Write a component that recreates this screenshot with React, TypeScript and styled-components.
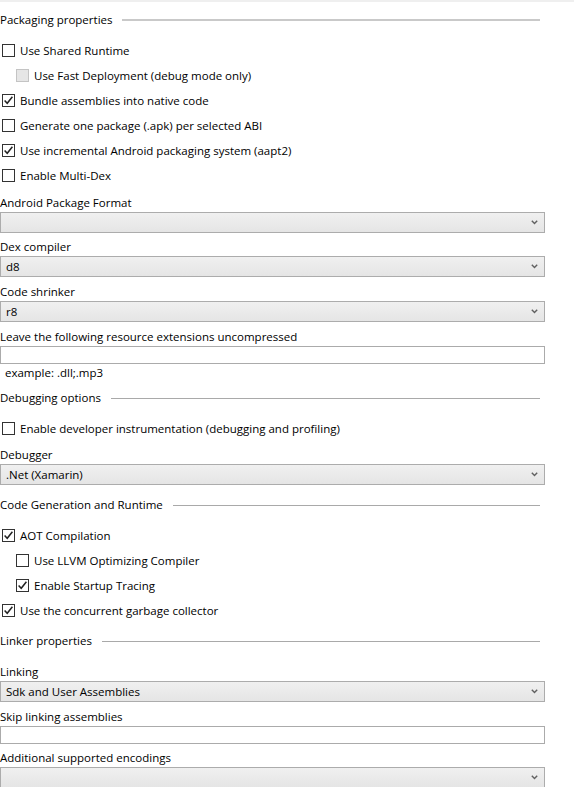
import React from "react";
import styled, { createGlobalStyle } from "styled-components";

const Global = createGlobalStyle`
  html, body { margin: 0; padding: 0; background: #ffffff; }
  body { font-family: "Segoe UI", "Open Sans", "Noto Sans", sans-serif; font-size: 11.5px; color: #000000; }
`;

const Page = styled.div`
  width: 574px;
  height: 787px;
  overflow: hidden;
  display: flex;
  flex-direction: column;
`;

const TopStrip = styled.div`
  height: 2px;
  background: #efefef;
  flex: none;
`;

const Content = styled.div`
  width: 545px;
  display: flex;
  flex-direction: column;
`;

const SectionHeader = styled.div<{ $top: number; $thick?: boolean }>`
  margin-top: ${(p) => p.$top}px;
  height: 20px;
  display: flex;
  align-items: center;
  gap: 10px;
  padding-right: 5px;
  line-height: 20px;
  white-space: nowrap;
  &::after {
    content: "";
    flex: 1;
    height: ${(p) => (p.$thick ? 2 : 1)}px;
    background: ${(p) => (p.$thick ? "#c9c9c9" : "#a9a9a9")};
  }
`;

const CheckList = styled.div<{ $top: number }>`
  margin-top: ${(p) => p.$top}px;
  display: flex;
  flex-direction: column;
`;

const CheckRow = styled.label<{ $indent?: boolean }>`
  height: 25px;
  display: flex;
  align-items: center;
  gap: 5px;
  padding-left: ${(p) => (p.$indent ? 16 : 2)}px;
  white-space: nowrap;
`;

const Box = styled.span<{ $disabled?: boolean }>`
  width: 13px;
  height: 13px;
  box-sizing: border-box;
  flex: none;
  border: 1px solid ${(p) => (p.$disabled ? "#c4c4c4" : "#333333")};
  background: ${(p) => (p.$disabled ? "#e6e6e6" : "#ffffff")};
  display: flex;
  align-items: center;
  justify-content: center;
`;

const Field = styled.div<{ $top: number }>`
  margin-top: ${(p) => p.$top}px;
  display: flex;
  flex-direction: column;
`;

const Label = styled.div`
  height: 18px;
  line-height: 18px;
  white-space: nowrap;
`;

const Select = styled.div`
  height: 21px;
  box-sizing: border-box;
  border: 1px solid #acacac;
  background: linear-gradient(#f0f0f0, #e5e5e5);
  display: flex;
  align-items: center;
  justify-content: space-between;
  padding: 0 6px 0 5px;
`;

const TextInput = styled.div`
  height: 18px;
  box-sizing: border-box;
  border: 1px solid #ababab;
  background: #ffffff;
`;

const Hint = styled.div`
  height: 18px;
  line-height: 18px;
  padding-left: 5px;
`;

const Check = ({ checked }: { checked: boolean }) =>
  checked ? (
    <svg width="11" height="11" viewBox="0 0 11 11">
      <path d="M1.6 5.6 L4.2 8.3 L9.4 1.8" fill="none" stroke="#222" strokeWidth="1.5" />
    </svg>
  ) : null;

const Chevron = () => (
  <svg width="7" height="5" viewBox="0 0 7 5">
    <path d="M0.8 0.8 L3.5 3.6 L6.2 0.8" fill="none" stroke="#606060" strokeWidth="1.4" />
  </svg>
);

type CB = { text: string; checked?: boolean; indent?: boolean; disabled?: boolean };

const CheckItem = ({ text, checked = false, indent, disabled }: CB) => (
  <CheckRow $indent={indent}>
    <Box $disabled={disabled}>
      <Check checked={checked} />
    </Box>
    <span>{text}</span>
  </CheckRow>
);

const SelectField = ({ label, value, top }: { label: string; value?: string; top: number }) => (
  <Field $top={top}>
    <Label>{label}</Label>
    <Select>
      <span>{value ?? ""}</span>
      <Chevron />
    </Select>
  </Field>
);

const InputField = ({ label, top }: { label: string; top: number }) => (
  <Field $top={top}>
    <Label>{label}</Label>
    <TextInput />
  </Field>
);

export default function App() {
  return (
    <Page>
      <Global />
      <TopStrip />
      <Content>
        <SectionHeader $top={8} $thick>
          Packaging properties
        </SectionHeader>
        <CheckList $top={8}>
          <CheckItem text="Use Shared Runtime" />
          <CheckItem text="Use Fast Deployment (debug mode only)" indent disabled />
          <CheckItem text="Bundle assemblies into native code" checked />
          <CheckItem text="Generate one package (.apk) per selected ABI" />
          <CheckItem text="Use incremental Android packaging system (aapt2)" checked />
          <CheckItem text="Enable Multi-Dex" />
        </CheckList>
        <SelectField label="Android Package Format" top={6} />
        <SelectField label="Dex compiler" value="d8" top={5} />
        <SelectField label="Code shrinker" value="r8" top={6} />
        <InputField label="Leave the following resource extensions uncompressed" top={6} />
        <Hint>example: .dll;.mp3</Hint>
        <SectionHeader $top={6}>Debugging options</SectionHeader>
        <CheckList $top={8}>
          <CheckItem text="Enable developer instrumentation (debugging and profiling)" />
        </CheckList>
        <SelectField label="Debugger" value=".Net (Xamarin)" top={5} />
        <SectionHeader $top={10}>Code Generation and Runtime</SectionHeader>
        <CheckList $top={8}>
          <CheckItem text="AOT Compilation" checked />
          <CheckItem text="Use LLVM Optimizing Compiler" indent />
          <CheckItem text="Enable Startup Tracing" indent checked />
          <CheckItem text="Use the concurrent garbage collector" checked />
        </CheckList>
        <SectionHeader $top={8}>Linker properties</SectionHeader>
        <SelectField label="Linking" value="Sdk and User Assemblies" top={12} />
        <InputField label="Skip linking assemblies" top={6} />
        <SelectField label="Additional supported encodings" top={5} />
      </Content>
    </Page>
  );
}
